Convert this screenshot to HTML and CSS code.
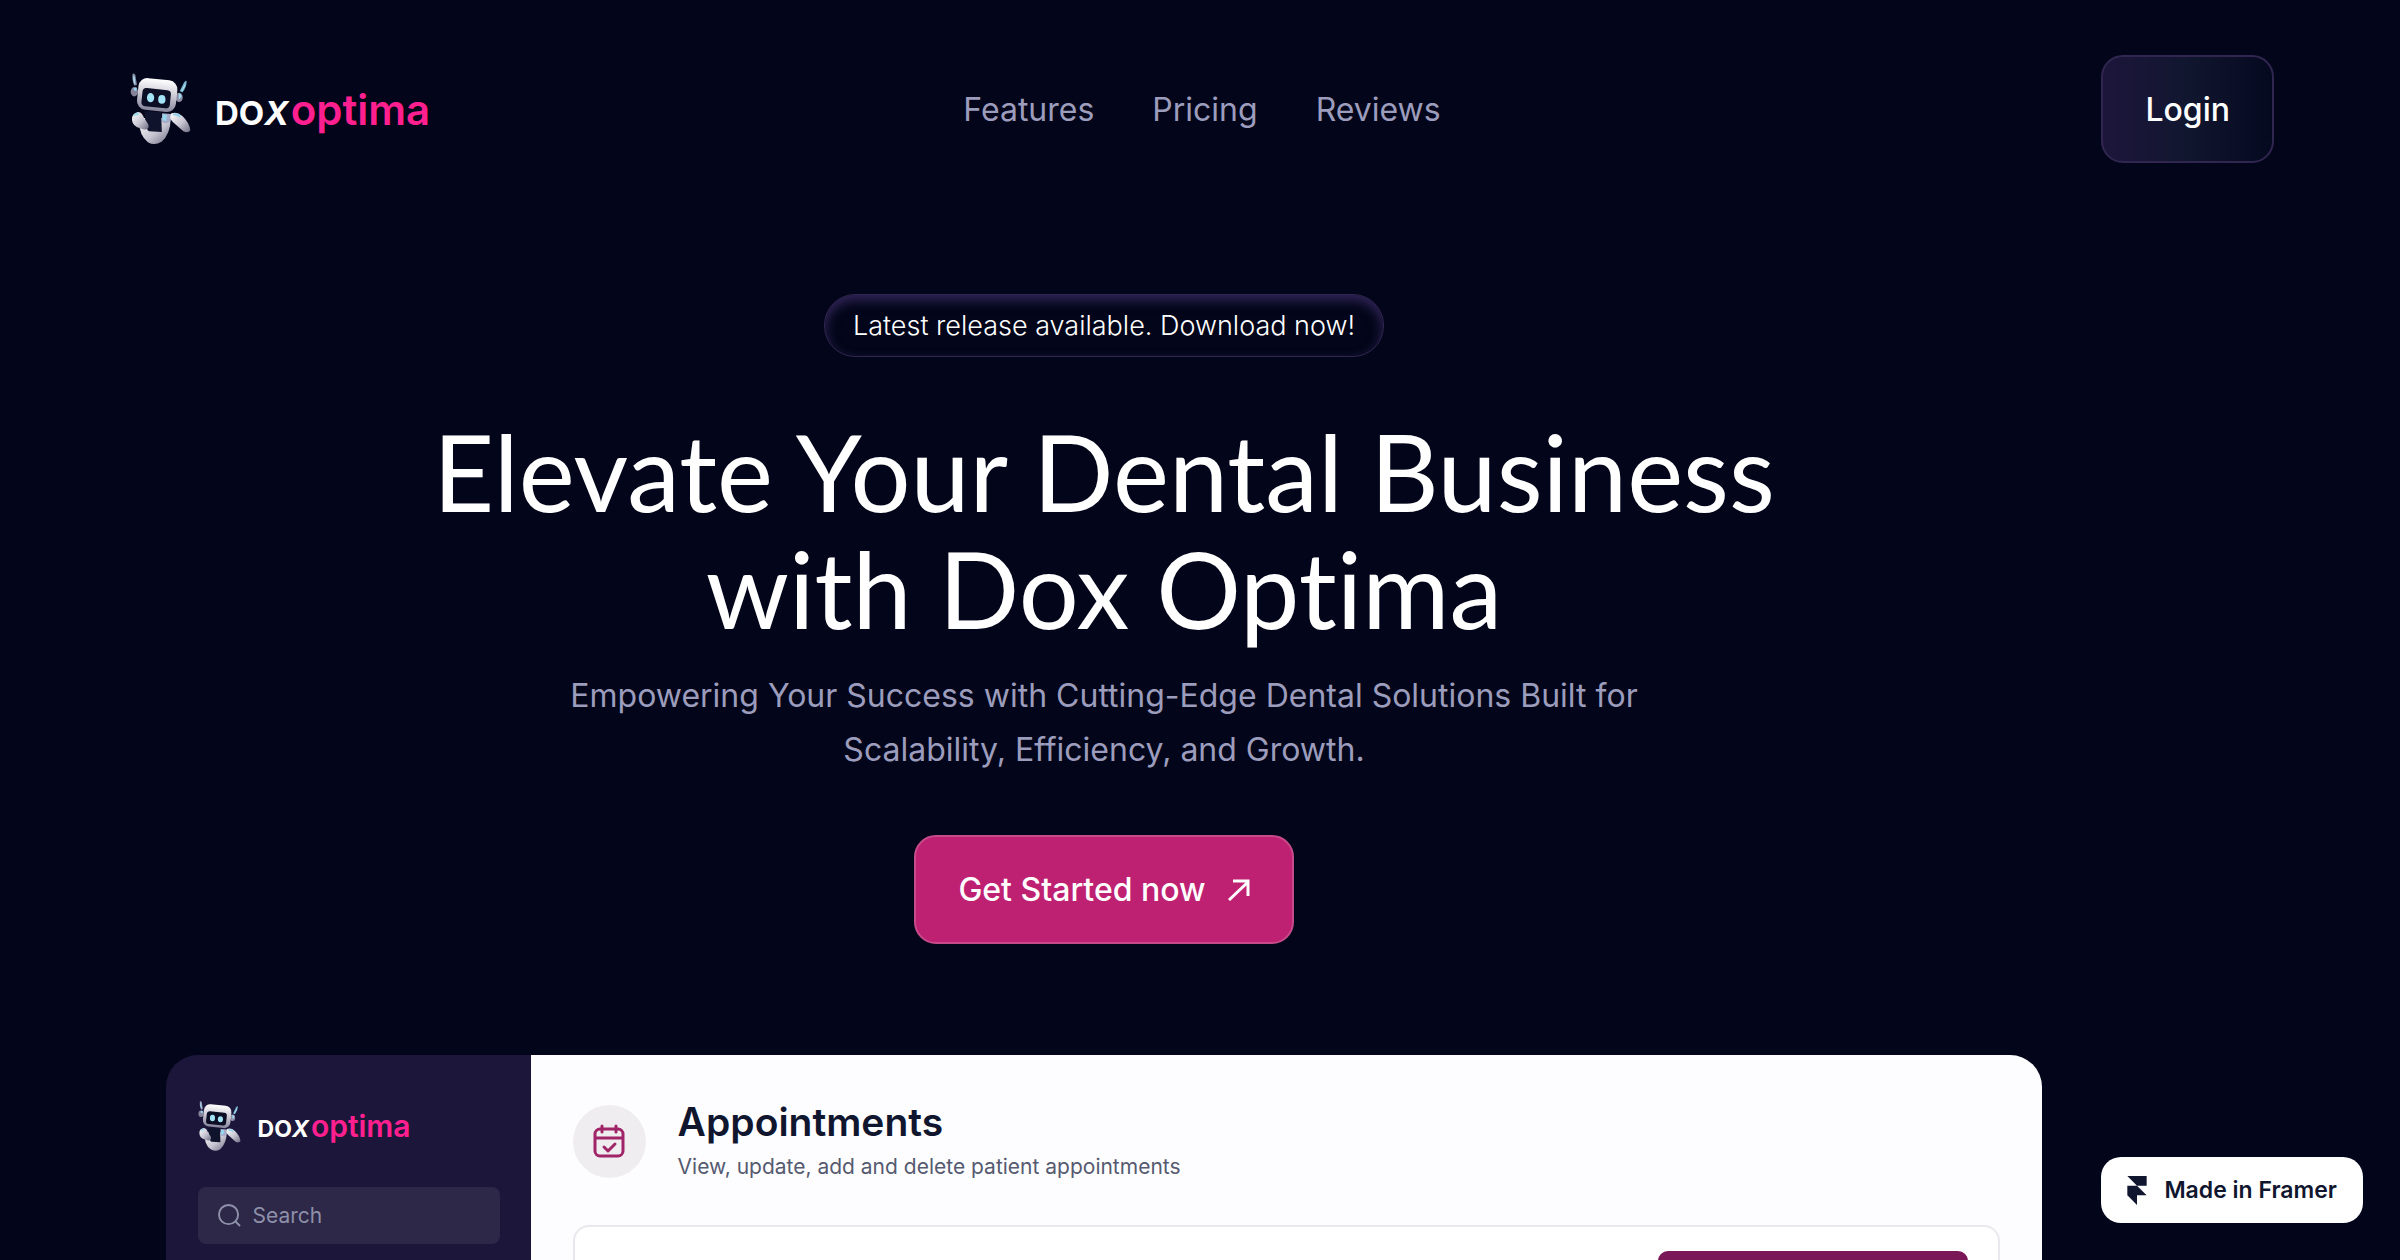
FILE: index.html
```html
<!doctype html>
<html lang="en">
  <head>
    <meta charset="UTF-8" />
    <meta name="viewport" content="width=device-width, initial-scale=1.0" />
    <title>Dox Optima</title>
    <link rel="stylesheet" href="styles.css">
  </head>
  <body>
    <svg class="sprite" aria-hidden="true">
      <defs>
        <linearGradient id="shell" x1="0" y1="0" x2="1" y2="1">
          <stop offset="0" stop-color="#ffffff" />
          <stop offset="0.55" stop-color="#c6c4d0" />
          <stop offset="1" stop-color="#6b6980" />
        </linearGradient>
        <linearGradient id="head" x1="0" y1="0" x2="0" y2="1">
          <stop offset="0" stop-color="#ffffff" />
          <stop offset="0.5" stop-color="#c9c7d2" />
          <stop offset="1" stop-color="#85839a" />
        </linearGradient>
      </defs>
      <symbol id="robot" viewBox="60 66 184 222">
        <path d="M68 71q5-4 8 4l5 29-8 3q-8-19-5-36z" fill="#8a8fa8" />
        <path d="M70 76q3 0 4 5l2 20-3 1q-5-12-3-26z" fill="#a4dcf2" />
        <path d="M231 93q-3-3-8 4l-13 26 8 4q13-16 13-34z" fill="#7bb4cf" />
        <path d="M228 98l-13 24 2 1q10-12 11-25z" fill="#b8e6f6" />
        <ellipse cx="73" cy="125" rx="11" ry="14" fill="#858399" />
        <path d="M70 115q6-5 11-2l-2 10q-7 0-9-8z" fill="#94d4ee" />
        <ellipse cx="208" cy="142" rx="11" ry="14" fill="#8d8ba2" />
        <path d="M207 129q8 2 9 10l-9 10z" fill="#9fdcf2" />
        <path d="M88 204q-3 52 26 73 20 12 41-1 27-23 28-72z" fill="url(#shell)" />
        <path d="M104 183l50 3 2 60-38-2q-12-2-14-61z" fill="#10132c" />
        <path d="M157 190l27 2-2 22q-17 12-26 0z" fill="#a7abc8" />
        <path d="M158 193l14 2-3 18-11-2z" fill="#96d6ee" />
        <path d="M85 186q-21 4-19 24 2 19 24 25 22 9 26-3 2-8-13-26-6-19-18-20z" fill="url(#shell)" />
        <path d="M71 196q5-11 16-8l-2 8q-8-2-14 4z" fill="#9ad8ee" />
        <path d="M185 190q16-6 33 8 21 20 24 43-6 11-21 3l-32-28q-13-13-4-26z" fill="url(#shell)" />
        <path d="M190 190q14-2 24 7l-5 6q-9-8-19-7z" fill="#90cfe8" />
        <rect x="83" y="87" width="118" height="96" rx="27" fill="url(#head)" transform="rotate(6 142 135)" />
        <rect x="96" y="117" width="86" height="55" rx="12" fill="#0b0e25" transform="rotate(6 139 144)" />
        <ellipse cx="122" cy="143" rx="11" ry="14" fill="#a4e2f5" />
        <ellipse cx="156" cy="148" rx="11" ry="13" fill="#a4e2f5" />
      </symbol>
    </svg>

    <div class="page">
      <header class="header">
        <a class="logo" href="#">
          <svg class="logo-robot"><use href="#robot" /></svg>
          <span class="logo-text"><span class="logo-dox">DO<i>X</i></span><span class="logo-optima">optima</span></span>
        </a>
        <nav class="nav">
          <a href="#features">Features</a>
          <a href="#pricing">Pricing</a>
          <a href="#reviews">Reviews</a>
        </nav>
        <button class="btn btn-login">Login</button>
      </header>

      <main class="hero">
        <a class="release" href="#download">Latest release available. Download now!</a>
        <h1>Elevate Your Dental Business<br>with Dox Optima</h1>
        <p class="lead">Empowering Your Success with Cutting-Edge Dental Solutions Built for Scalability, Efficiency, and Growth.</p>
        <button class="btn btn-primary">
          Get Started now
          <svg viewBox="0 0 22 22"><path d="M1 21L20 3M5 2h15v15" /></svg>
        </button>

        <section class="dashboard">
          <aside class="sidebar">
            <a class="logo logo-small" href="#">
              <svg class="logo-robot"><use href="#robot" /></svg>
              <span class="logo-text"><span class="logo-dox">DO<i>X</i></span><span class="logo-optima">optima</span></span>
            </a>
            <label class="search">
              <svg viewBox="0 0 24 24"><circle cx="11" cy="11" r="10" /><path d="M18 18l5 5" /></svg>
              <input type="search" placeholder="Search" aria-label="Search" />
            </label>
          </aside>

          <div class="content">
            <div class="content-head">
              <div class="content-icon">
                <svg viewBox="0 0 32 34">
                  <path d="M7 5h18a5 5 0 0 1 5 5v17a5 5 0 0 1-5 5H7a5 5 0 0 1-5-5V10a5 5 0 0 1 5-5zM2 14h28M9 2v6M23 2v6M11 23l4 4 7-7" />
                </svg>
              </div>
              <div>
                <h2>Appointments</h2>
                <p>View, update, add and delete patient appointments</p>
              </div>
            </div>
            <div class="card">
              <button class="card-button" aria-label="Add"></button>
            </div>
          </div>
        </section>
      </main>
    </div>

    <a class="framer" href="#framer">
      <svg viewBox="0 0 20 30"><path d="M0 0h20v10H10zM0 10h10l10 10H10v10L0 20z" /></svg>
      Made in Framer
    </a>
  </body>
</html>
```

FILE: styles.css
```css
:root {
  --bg: #03061a;
  --text: #ffffff;
  --muted: #9c9cbc;
  --pink: #ff1f8f;
  --primary: #bf2172;
  --plum: #791757;
  --indigo: #1d163b;
  --line: #30264f;
  --ink: #11162f;
}

* {
  box-sizing: border-box;
}

body {
  margin: 0;
  background: var(--bg);
  color: var(--text);
  font-family: Inter, 'Liberation Sans', sans-serif;
}

a {
  color: inherit;
  text-decoration: none;
}

h1,
h2,
p {
  margin: 0;
}

button {
  font: inherit;
  cursor: pointer;
}

.sprite {
  position: absolute;
  width: 0;
  height: 0;
}

.page {
  height: 100vh;
  overflow: hidden;
}

/* Header */
.header {
  display: grid;
  grid-template-columns: 1fr auto 1fr;
  align-items: center;
  padding: 55px 126px 0 130px;
}

.logo {
  display: flex;
  align-items: center;
  gap: 24px;
}

.logo-robot {
  width: 61px;
  height: 74px;
}

.logo-text {
  display: flex;
  align-items: baseline;
  gap: 2px;
}

.logo-dox {
  font-size: 33px;
  font-weight: 700;
}

.logo-optima {
  color: var(--pink);
  font-size: 42px;
  font-weight: 600;
}

.logo-small {
  gap: 17px;
}

.logo-small .logo-robot {
  width: 43px;
  height: 52px;
}

.logo-small .logo-dox {
  font-size: 23px;
}

.logo-small .logo-optima {
  font-size: 30px;
}

.nav {
  display: flex;
  gap: 58px;
  color: var(--muted);
  font-size: 32px;
}

.btn {
  height: 108px;
  padding: 0 42px;
  border-radius: 22px;
  color: var(--text);
  font-size: 32px;
  font-weight: 500;
}

.btn-login {
  justify-self: end;
  border: 2px solid var(--line);
  background: linear-gradient(90deg, #1d163b, #11162f 50%, #050920);
}

/* Hero */
.hero {
  display: flex;
  flex-direction: column;
  align-items: center;
  margin-right: 8%;
  padding-top: 131px;
  text-align: center;
}

.release {
  padding: 1px 28px 0;
  border: 1px solid var(--line);
  border-radius: 31px;
  box-shadow: inset 0 5px 12px #33265a;
  font-size: 27px;
  font-weight: 300;
  line-height: 60px;
}

h1 {
  margin-top: 56px;
  font-family: Lato, 'Liberation Sans', sans-serif;
  font-size: 106px;
  font-weight: 400;
  font-variant-ligatures: none;
  line-height: 117px;
}

.lead {
  max-width: 1100px;
  margin-top: 22px;
  color: var(--muted);
  font-size: 32px;
  line-height: 54px;
}

.btn-primary {
  display: flex;
  align-items: center;
  gap: 22px;
  height: 109px;
  margin-top: 58px;
  border: 2px solid #c74a8b;
  background: var(--primary);
}

.btn-primary svg {
  width: 22px;
  height: 22px;
  fill: none;
  stroke: currentColor;
  stroke-width: 3;
}

/* Dashboard preview */
.dashboard {
  display: flex;
  width: 85%;
  margin-top: 111px;
  border-radius: 32px 32px 0 0;
  overflow: hidden;
  text-align: left;
}

.sidebar {
  width: 365px;
  padding: 45px 31px 45px 32px;
  background: var(--indigo);
}

.search {
  display: flex;
  align-items: center;
  gap: 12px;
  height: 57px;
  margin-top: 35px;
  padding: 0 20px;
  border-radius: 8px;
  background: #2d2748;
}

.search svg {
  width: 23px;
  height: 23px;
  flex: none;
  fill: none;
  stroke: #8e90a9;
  stroke-width: 2;
}

.search input {
  width: 100%;
  padding: 0;
  border: 0;
  outline: 0;
  background: none;
  color: var(--text);
  font: 400 21px Inter, 'Liberation Sans', sans-serif;
}

.search input::placeholder {
  color: #8e90a9;
}

.content {
  flex: 1;
  padding: 42px 42px 0;
  background: #fdfdff;
  color: var(--ink);
}

.content-head {
  display: flex;
  align-items: center;
  gap: 32px;
}

.content-icon {
  display: grid;
  place-items: center;
  width: 73px;
  height: 73px;
  border-radius: 50%;
  background: #efedf0;
}

.content-icon svg {
  width: 32px;
  height: 34px;
  fill: none;
  stroke: #a02468;
  stroke-width: 3;
  stroke-linecap: round;
  stroke-linejoin: round;
}

h2 {
  font-size: 39px;
  font-weight: 600;
  line-height: 50px;
}

.content-head p {
  padding-top: 2px;
  color: #565a70;
  font-size: 21px;
  line-height: 36px;
}

.card {
  display: flex;
  justify-content: flex-end;
  height: 400px;
  margin-top: 40px;
  padding: 24px 30px;
  border: 2px solid #e9e8ee;
  border-radius: 16px;
  background: #ffffff;
}

.card-button {
  width: 310px;
  height: 64px;
  border: 0;
  border-radius: 10px;
  background: var(--plum);
}

/* Badge pinned to the corner of the window */
.framer {
  position: fixed;
  right: 37px;
  bottom: 37px;
  display: flex;
  align-items: center;
  gap: 17px;
  height: 66px;
  padding: 0 26px;
  border-radius: 20px;
  background: #ffffff;
  color: var(--ink);
  font-size: 23px;
  font-weight: 600;
}

.framer svg {
  width: 20px;
  height: 29px;
  fill: currentColor;
}
```
